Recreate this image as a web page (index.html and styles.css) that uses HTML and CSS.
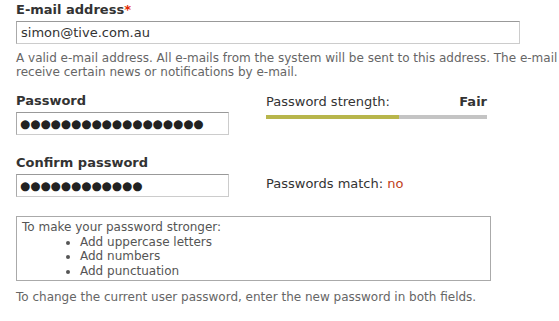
FILE: index.html
```html
<!DOCTYPE html>
<html lang="en">
<head>
    <meta charset="UTF-8">
    <title>Account</title>
    <link rel="stylesheet" href="styles.css">
</head>
<body>
    <div class="form-item">
        <label for="mail">E-mail address<span class="required">*</span></label>
        <input type="text" id="mail" class="wide" value="simon@tive.com.au">
        <div class="description">
            <span class="line">A valid e-mail address. All e-mails from the system will be sent to this address. The e-mail address is not made public and will only be used if you wish to</span>
            <span class="line">receive certain news or notifications by e-mail.</span>
        </div>
    </div>
    <div class="password-row">
        <div class="form-item narrow">
            <label for="pass1">Password</label>
            <input type="text" id="pass1" class="dots" value="●●●●●●●●●●●●●●●●●●">
        </div>
        <div class="strength">
            <div class="strength-text">
                <span>Password strength:</span>
                <strong>Fair</strong>
            </div>
            <div class="indicator"><div class="fill" style="width: 60%"></div></div>
        </div>
    </div>
    <div class="password-row confirm">
        <div class="form-item narrow">
            <label for="pass2">Confirm password</label>
            <input type="text" id="pass2" class="dots" value="●●●●●●●●●●●●">
        </div>
        <div class="match">Passwords match: <span class="no">no</span></div>
    </div>
    <div class="suggestions">
        To make your password stronger:
        <ul>
            <li>Add uppercase letters</li>
            <li>Add numbers</li>
            <li>Add punctuation</li>
        </ul>
    </div>
    <div class="description last">To change the current user password, enter the new password in both fields.</div>
</body>
</html>
```

FILE: styles.css
```css
body {
    font-family: 'DejaVu Sans', sans-serif;
    font-size: 13px;
    color: #333;
    margin: 0;
    padding: 1px 0 0 16px;
    overflow: hidden;
    background: #fff;
}
label {
    display: block;
    font-weight: bold;
    line-height: 18px;
    margin-bottom: 2px;
}
.required {
    color: #e32700;
}
input {
    display: block;
    box-sizing: border-box;
    font-family: 'DejaVu Sans', sans-serif;
    font-size: 13px;
    color: #333;
    height: 23px;
    padding: 1px 4px;
    margin: 0;
    border: 1px solid #ccc;
    border-top-color: #999;
    border-left-color: #aaa;
    outline: none;
}
input.wide {
    width: 504px;
}
input.dots {
    color: #222;
    font-size: 11.7px;
    padding-left: 3px;
}
.narrow input {
    width: 213px;
}
.description {
    font-size: 12px;
    color: #666;
    line-height: 14px;
    margin-top: 7px;
}
.description .line {
    display: block;
    white-space: nowrap;
}
.password-row {
    display: flex;
    align-items: flex-start;
    margin-top: 13px;
}
.password-row.confirm {
    margin-top: 19px;
    align-items: flex-end;
}
.narrow {
    width: 213px;
}
.strength {
    width: 221px;
    margin-left: 37px;
    padding-top: 2px;
}
.strength-text {
    display: flex;
    justify-content: space-between;
    line-height: 16px;
}
.indicator {
    height: 4px;
    background: #c4c4c4;
    margin-top: 5px;
}
.fill {
    height: 100%;
    background: #b8b64c;
}
.match {
    margin-left: 37px;
    line-height: 16px;
    padding-bottom: 5px;
}
.no {
    color: #c0401a;
}
.suggestions {
    box-sizing: border-box;
    width: 475px;
    margin-top: 19px;
    border: 1px solid #aaa;
    padding: 3px 5px 2px;
    font-size: 12px;
    color: #555;
    line-height: 14.5px;
}
.suggestions ul {
    margin: 0;
    padding-left: 58px;
}
.description.last {
    margin-top: 9px;
}
```
